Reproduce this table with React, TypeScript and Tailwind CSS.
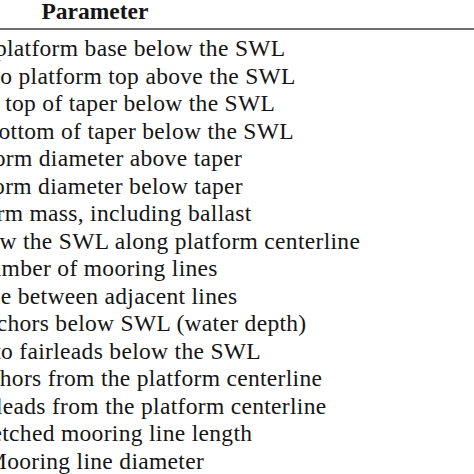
import React from "react";

const rows = [
  "Depth to platform base below the SWL",
  "Elevation to platform top above the SWL",
  "Depth to top of taper below the SWL",
  "Depth to bottom of taper below the SWL",
  "Platform diameter above taper",
  "Platform diameter below taper",
  "Platform mass, including ballast",
  "CM location below the SWL along platform centerline",
  "Number of mooring lines",
  "Angle between adjacent lines",
  "Depth to anchors below SWL (water depth)",
  "Depth to fairleads below the SWL",
  "Radius to anchors from the platform centerline",
  "Radius to fairleads from the platform centerline",
  "Unstretched mooring line length",
  "Mooring line diameter",
];

export default function App() {
  return (
    <div
      className="w-[474px] h-[474px] overflow-hidden bg-white text-[#151515]"
      style={{ fontFamily: '"Liberation Serif", "DejaVu Serif", serif' }}
    >
      <div className="mt-[-2.5px] h-[30.5px] w-[190px] flex flex-col items-center text-[23.5px] leading-[27.5px] font-bold whitespace-nowrap">
        <span>Parameter</span>
      </div>
      <div className="h-[2px] w-full bg-[#6e6e6e]" />
      <div className="pt-[5.3px] w-[190px] flex flex-col items-center text-[23.5px] leading-[27.5px] tracking-[0.32px] whitespace-nowrap">
        {rows.map((r) => (
          <div key={r}>{r}</div>
        ))}
      </div>
    </div>
  );
}
